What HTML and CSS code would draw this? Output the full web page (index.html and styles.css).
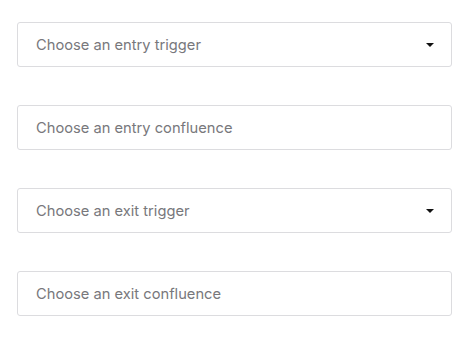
FILE: index.html
```html
<!DOCTYPE html>
<html>
<head>
<meta charset="utf-8">
<link rel="stylesheet" href="styles.css">
</head>
<body>
<div class="form">
  <div class="field select"><span class="placeholder">Choose an entry trigger</span><span class="caret"></span></div>
  <div class="field"><span class="placeholder">Choose an entry confluence</span></div>
  <div class="field select"><span class="placeholder">Choose an exit trigger</span><span class="caret"></span></div>
  <div class="field"><span class="placeholder">Choose an exit confluence</span></div>
</div>
</body>
</html>
```
FILE: styles.css
```css
html, body { margin: 0; padding: 0; background: #fff; }
.form {
  display: flex;
  flex-direction: column;
  gap: 38px;
  padding: 22px 0 0 17px;
  width: 435px;
}
.field {
  box-sizing: border-box;
  height: 45px;
  border: 1px solid #dcdcdf;
  border-radius: 3px;
  display: flex;
  align-items: center;
  justify-content: space-between;
  padding: 0 17px 0 18px;
  font-family: Inter, "Noto Sans", sans-serif;
  font-size: 14.7px;
  color: #78787c;
}
.caret {
  width: 0; height: 0;
  border-left: 4.5px solid transparent;
  border-right: 4.5px solid transparent;
  border-top: 4.5px solid #111;
}
```
